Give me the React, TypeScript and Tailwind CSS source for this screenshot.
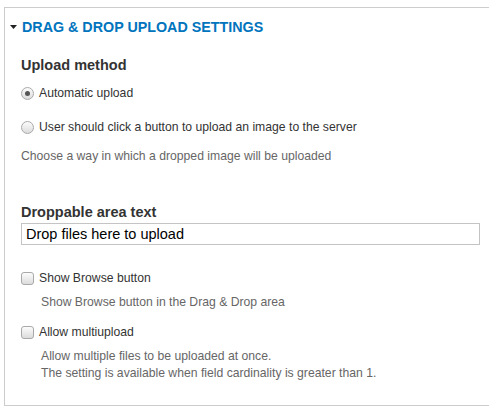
import React from "react";

function Radio({ checked }: { checked?: boolean }) {
  return (
    <span className="flex h-[13px] w-[13px] shrink-0 items-center justify-center rounded-full border border-[#a9a9a9] bg-gradient-to-b from-[#fcfcfc] to-[#dcdcdc]">
      {checked && <span className="h-[5px] w-[5px] rounded-full bg-[#555]" />}
    </span>
  );
}

function Checkbox() {
  return (
    <span className="block h-[13px] w-[13px] shrink-0 rounded-[3px] border border-[#a9a9a9] bg-gradient-to-b from-[#fcfcfc] to-[#dcdcdc]" />
  );
}

export default function App() {
  return (
    <div className="h-[414px] w-full overflow-hidden bg-white pl-[4px] pt-[7px] font-['Liberation_Sans',Arial,sans-serif] text-[#333]">
      <div className="h-[399px] border border-r-0 border-[#cccccc]">
        <div className="flex items-center pl-[5px] pt-[10px]">
          <svg width="7" height="5" viewBox="0 0 7 5" className="mr-[5px]">
            <path d="M0 0 L7 0 L3.5 4 Z" fill="#222" />
          </svg>
          <span className="text-[14.3px] font-bold leading-[18px] text-[#0074bd]">
            DRAG &amp; DROP UPLOAD SETTINGS
          </span>
        </div>

        <div className="pl-[16px] pr-[8px]">
          <div className="mt-[20px] text-[14.5px] font-bold leading-[18px]">Upload method</div>

          <div className="mt-[11px] flex items-center gap-[5px] text-[12.2px] leading-[16px]">
            <Radio checked />
            <span>Automatic upload</span>
          </div>
          <div className="mt-[18px] flex items-center gap-[5px] text-[12.2px] leading-[16px]">
            <Radio />
            <span>User should click a button to upload an image to the server</span>
          </div>
          <div className="mt-[13px] text-[12.2px] leading-[16px] text-[#666]">
            Choose a way in which a dropped image will be uploaded
          </div>

          <div className="mt-[39px] text-[14.5px] font-bold leading-[18px]">Droppable area text</div>
          <div className="mr-[1px] mt-[2px] h-[22px] border border-[#c4c4c4] pl-[4px] text-[14.5px] leading-[20px] text-black">
            Drop files here to upload
          </div>

          <div className="mt-[25px] flex items-center gap-[5px] text-[12.2px] leading-[16px]">
            <Checkbox />
            <span>Show Browse button</span>
          </div>
          <div className="mt-[8px] pl-[20px] text-[12.2px] leading-[16px] text-[#666]">
            Show Browse button in the Drag &amp; Drop area
          </div>

          <div className="mt-[14px] flex items-center gap-[5px] text-[12.2px] leading-[16px]">
            <Checkbox />
            <span>Allow multiupload</span>
          </div>
          <div className="mt-[8px] pl-[20px] text-[12.2px] leading-[17px] text-[#666]">
            <div>Allow multiple files to be uploaded at once.</div>
            <div>The setting is available when field cardinality is greater than 1.</div>
          </div>
        </div>
      </div>
    </div>
  );
}
